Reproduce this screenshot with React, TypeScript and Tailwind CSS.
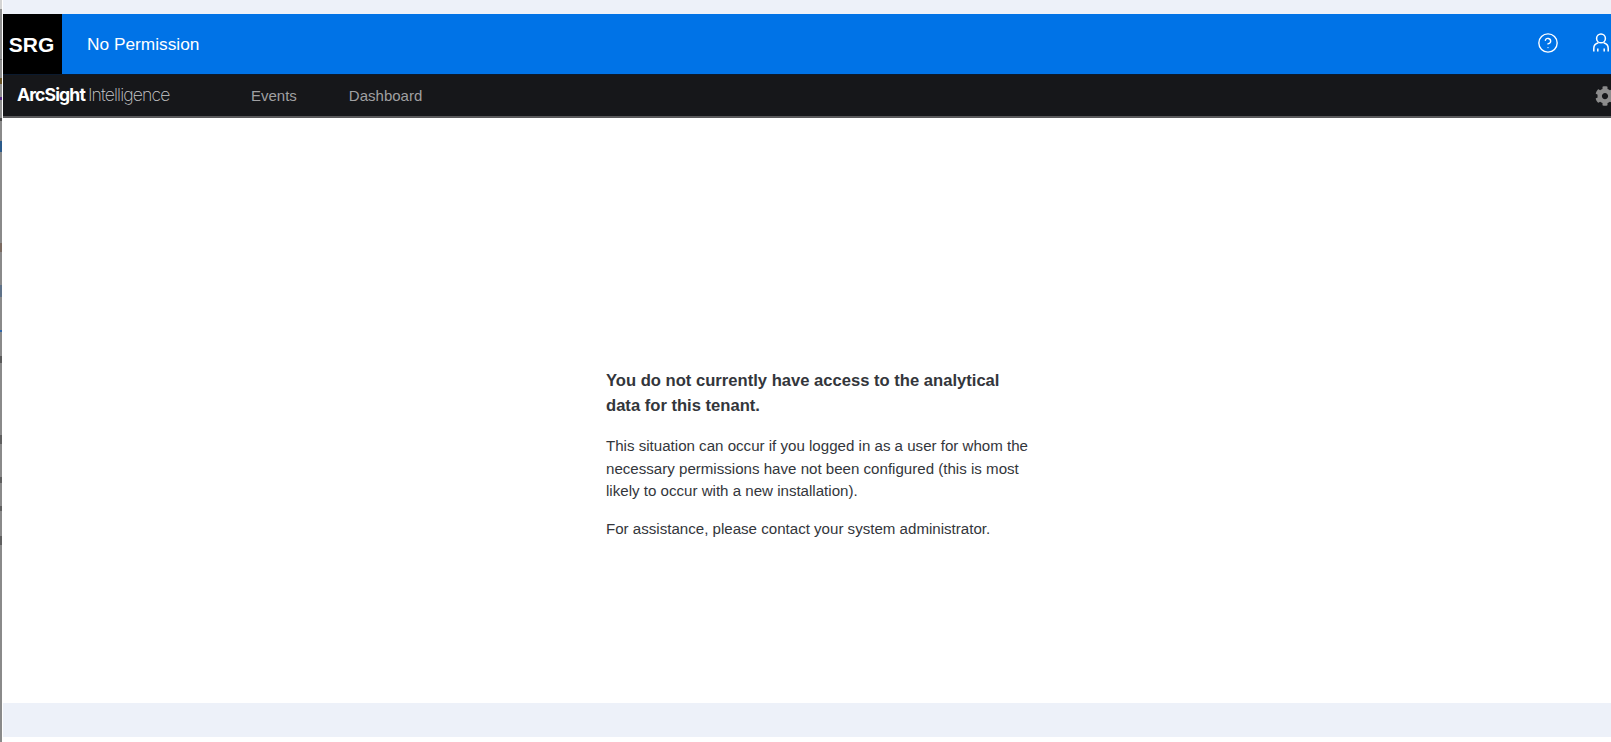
import React from 'react';
import { CircleHelp } from 'lucide-react';
import { FaCog } from 'react-icons/fa';

const UserIcon = () => (
    <svg className="mb-[2px]" width="16" height="19" viewBox="0 0 16 19" fill="none" stroke="currentColor" strokeWidth="1.5">
        <circle cx="8" cy="5.4" r="4.4" />
        <path d="M0.8 18.5v-3.2c0-2.8 2.4-4.9 4.6-5.5M15.2 18.5v-3.2c0-2.8-2.4-4.9-4.6-5.5" />
        <path d="M4.8 18.5v-3M11.2 18.5v-3" />
    </svg>
);

// sliver of the window behind: height + colour, top to bottom
const sliver: string[] = [
    'h-[9px] bg-[#d4d4d4]',
    'h-[50px] bg-[#8f8f8f]',
    'h-px bg-[#6a6a6a]',
    'h-[18px] bg-[#8f8f8f]',
    'h-[6px] bg-[#6b5526]',
    'h-[13px] bg-[#8f8f8f]',
    'h-[3px] bg-[#5a2a86]',
    'h-[18px] bg-[#8f8f8f]',
    'h-[3px] bg-[#4a4a4a]',
    'h-[20px] bg-[#8a8a8a]',
    'h-[11px] bg-[#2b5a8a]',
    'h-[91px] bg-[#8a8a8a]',
    'h-[9px] bg-[#7a6a60]',
    'h-[33px] bg-[#8a8a8a]',
    'h-[12px] bg-[#5f7288]',
    'h-[33px] bg-[#8a8a8a]',
    'h-[2px] bg-[#2f66a8]',
    'h-[24px] bg-[#8a8a8a]',
    'h-[7px] bg-[#5a5a5a]',
    'h-[72px] bg-[#8a8a8a]',
    'h-[9px] bg-[#5f5f5f]',
    'h-[33px] bg-[#8a8a8a]',
    'h-[6px] bg-[#5f5f5f]',
    'h-[23px] bg-[#8a8a8a]',
    'h-[5px] bg-[#5f5f5f]',
    'h-[25px] bg-[#8a8a8a]',
    'h-[9px] bg-[#5f5f5f]',
];

export default function App() {
    return (
        <div className="flex h-[742px] overflow-hidden bg-white font-['Liberation_Sans',Arial,sans-serif]">
            <div className="flex w-[2px] shrink-0 flex-col bg-[#8a8a8a]">
                {sliver.map((s, i) => (
                    <div key={i} className={s} />
                ))}
            </div>
            <div className="ml-px flex min-w-0 flex-1 flex-col">
                <div className="h-[14px] bg-[#edf1f9]" />

                <header className="flex h-[60px] items-center bg-[#0073e7] text-white">
                    <div className="flex h-full w-[59px] items-center justify-center bg-black pt-px pr-[2px] text-[21px] font-bold">SRG</div>
                    <h1 className="ml-[25px] pt-px text-[17.3px]">No Permission</h1>
                    <div className="ml-auto mb-[2px] flex items-center gap-[34px] pr-[2px]">
                        <CircleHelp className="h-[22px] w-[22px]" strokeWidth={1.5} />
                        <UserIcon />
                    </div>
                </header>

                <nav className="flex h-[44px] items-center border-t border-b-2 border-t-[#0b1a2e] border-b-[#5a5a5c] bg-[#16171a]">
                    <div className="ml-[14px] w-[234px] text-[17.6px] tracking-[-0.88px] text-white font-['Inter',sans-serif]">
                        <span className="font-bold">ArcSight</span>
                        <span className="ml-[3px] font-extralight text-[#c9c9cb]">Intelligence</span>
                    </div>
                    <a className="pt-px text-[15px] text-[#a0a0a2]">Events</a>
                    <a className="ml-[52px] pt-px text-[15px] text-[#a0a0a2]">Dashboard</a>
                    <FaCog className="ml-auto mr-[-4px] h-[20px] w-[20px] text-[#8c8c8c]" />
                </nav>

                <main className="flex-1 pl-[603px] pt-[251px] text-[#33363b]">
                    <div className="w-[430px]">
                        <h2 className="w-[410px] text-[16.6px] font-bold leading-[24.5px]">
                            You do not currently have access to the analytical data for this tenant.
                        </h2>
                        <p className="mt-[17px] w-[425px] text-[15.1px] leading-[22.67px]">
                            This situation can occur if you logged in as a user for whom the necessary permissions have not been configured (this is most likely to occur with a new installation).
                        </p>
                        <p className="mt-[15px] text-[15.1px] leading-[22.67px]">
                            For assistance, please contact your system administrator.
                        </p>
                    </div>
                </main>

                <footer className="mb-[5px] h-[34px] bg-[#edf1f9]" />
            </div>
        </div>
    );
}
